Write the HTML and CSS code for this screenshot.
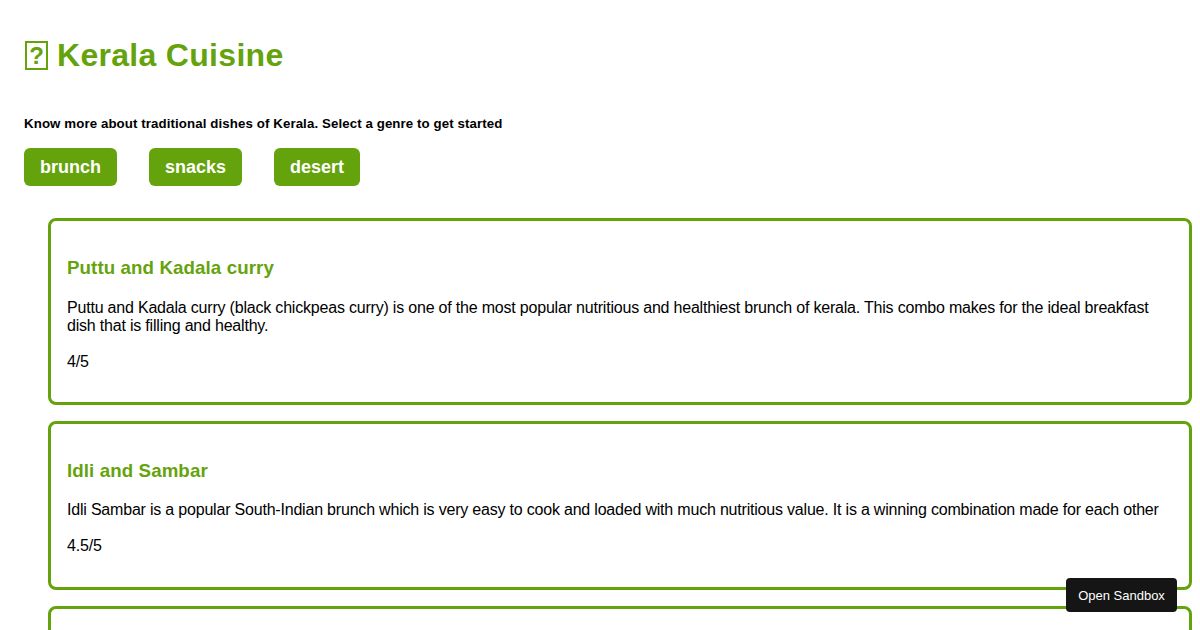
FILE: index.html
```html
<!DOCTYPE html>
<html lang="en">
<head>
<meta charset="utf-8">
<title>Kerala Cuisine</title>
<link rel="stylesheet" href="styles.css">
</head>
<body>
<div class="header">
  <h1 class="title"><span class="tofu">?</span>Kerala Cuisine</h1>
  <p class="intro">Know more about traditional dishes of Kerala. Select a genre to get started</p>
  <div class="genres">
    <button class="genre">brunch</button>
    <button class="genre">snacks</button>
    <button class="genre">desert</button>
  </div>
</div>
<ul class="dishes">
  <li class="dish">
    <h3 class="dish-name">Puttu and Kadala curry</h3>
    <p class="dish-desc">Puttu and Kadala curry (black chickpeas curry) is one of the most popular nutritious and healthiest brunch of kerala. This combo makes for the ideal breakfast dish that is filling and healthy.</p>
    <p class="dish-rating">4/5</p>
  </li>
  <li class="dish">
    <h3 class="dish-name">Idli and Sambar</h3>
    <p class="dish-desc">Idli Sambar is a popular South-Indian brunch which is very easy to cook and loaded with much nutritious value. It is a winning combination made for each other</p>
    <p class="dish-rating">4.5/5</p>
  </li>
  <li class="dish">
    <h3 class="dish-name">Appam and Stew</h3>
    <p class="dish-desc">Appam with vegetable stew is a classic Kerala breakfast combination.</p>
    <p class="dish-rating">4/5</p>
  </li>
</ul>
<a class="sandbox-btn">Open Sandbox</a>
</body>
</html>
```
FILE: styles.css
```css
html, body {
  background: #ffffff;
}
body {
  margin: 8px;
  font-family: "Liberation Sans", Arial, sans-serif;
  color: #000000;
}
.header {
  padding: 8px 16px 0;
}
.title {
  font-size: 32px;
  font-weight: bold;
  color: #65a30d;
  margin: 21.44px 0 0;
  line-height: normal;
  letter-spacing: 0.3px;
}
.tofu {
  display: inline-block;
  box-sizing: border-box;
  width: 23px;
  height: 29px;
  border: 2px solid #65a30d;
  margin-left: 1px;
  margin-right: 9px;
  font-size: 24px;
  line-height: 25px;
  text-align: center;
  vertical-align: -4px;
  overflow: hidden;
  letter-spacing: 0;
}
.intro {
  font-size: 13.28px;
  font-weight: bold;
  margin: 42px 0 16.7px;
  line-height: normal;
  letter-spacing: 0.1px;
}
.genres {
  display: flex;
  gap: 32px;
  margin-bottom: 32px;
}
.genre {
  font-family: "Liberation Sans", Arial, sans-serif;
  font-size: 18px;
  font-weight: bold;
  line-height: 21px;
  color: #ffffff;
  background: #65a30d;
  border: none;
  border-radius: 6px;
  padding: 8.5px 16px;
  margin: 0;
}
.dishes {
  list-style: none;
  margin: 0;
  padding: 0 0 0 40px;
}
.dish {
  border: 3px solid #65a30d;
  border-radius: 8px;
  padding: 16px;
  margin-bottom: 16px;
}
.dish-name {
  font-size: 18.72px;
  font-weight: bold;
  color: #65a30d;
  margin: 19.7px 0 19.72px;
  letter-spacing: 0.1px;
}
.dish-desc {
  font-size: 16px;
  margin: 0 0 18px;
  letter-spacing: -0.2px;
}
.dish-rating {
  font-size: 16px;
  margin: 0 0 15.5px;
  letter-spacing: -0.2px;
}
.sandbox-btn {
  position: fixed;
  right: 23px;
  bottom: 18px;
  width: 111px;
  height: 34px;
  box-sizing: border-box;
  display: flex;
  align-items: center;
  justify-content: center;
  background: #151515;
  color: #ffffff;
  border-radius: 4px;
  font-family: "Liberation Sans", Arial, sans-serif;
  font-size: 13px;
}
```
